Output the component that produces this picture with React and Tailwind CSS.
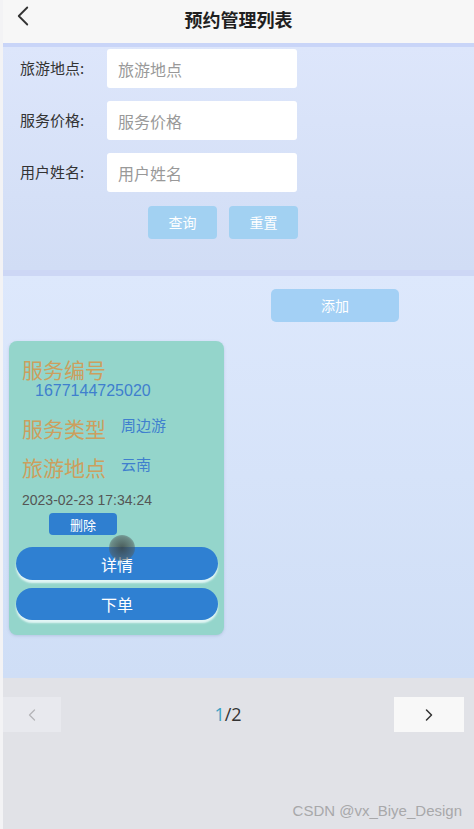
import { ChevronLeft, ChevronRight } from 'lucide-react';

const fields = [
  { label: '旅游地点:', placeholder: '旅游地点' },
  { label: '服务价格:', placeholder: '服务价格' },
  { label: '用户姓名:', placeholder: '用户姓名' },
];

const font = { fontFamily: '"Noto Sans CJK SC", "Noto Sans", sans-serif' };

export default function App() {
  return (
    <div
      className="w-[474px] h-[829px] flex flex-col border-l-[3px] border-[#f3f3f5] bg-[#e1e2e7] overflow-hidden"
      style={font}
    >
      {/* Header */}
      <div className="relative h-[43px] shrink-0 bg-[#f7f7f7] flex items-center justify-center">
        <ChevronLeft className="absolute left-[3px] -top-[1px] w-[34px] h-[34px] text-[#333]" strokeWidth={1.3} />
        <h1 className="text-[18px] font-bold text-[#1f1f1f] -mt-[5px]">预约管理列表</h1>
      </div>

      {/* Search form */}
      <div className="h-[233px] shrink-0 bg-gradient-to-b from-[#dde6fb] to-[#d1ddf5] border-t-[4px] border-b-[6px] border-t-[#c9d5f8] border-b-[#cdd7f5] pt-[2px] pl-[17px]">
        <div className="flex flex-col gap-[13px]">
          {fields.map((f) => (
            <div key={f.label} className="flex items-center h-[39px]">
              <span className="w-[87px] text-[15px] text-[#333]">{f.label}</span>
              <div className="w-[190px] h-[39px] bg-white rounded-[3px] flex items-center pl-[11px] text-[16px] text-[#999]">
                {f.placeholder}
              </div>
            </div>
          ))}
        </div>
        <div className="flex gap-[12px] pl-[128px] mt-[14px]">
          <button className="w-[69px] h-[33px] rounded-[4px] bg-[#a2d1f2] text-white text-[14px]">查询</button>
          <button className="w-[69px] h-[33px] rounded-[4px] bg-[#a2d1f2] text-white text-[14px]">重置</button>
        </div>
      </div>

      {/* List */}
      <div className="h-[402px] shrink-0 bg-gradient-to-b from-[#dde8fc] to-[#cfdef6] pt-[13px]">
        <div className="flex pl-[268px]">
          <button className="w-[128px] h-[33px] rounded-[5px] bg-[#a3d0f5] text-white text-[14px]">添加</button>
        </div>
        <div className="relative ml-[6px] mt-[19px] w-[215px] h-[294px] rounded-[8px] bg-[#94d5cb] pt-[16px] px-[7px] shadow-[0_1px_3px_rgba(120,140,180,0.3)]">
          <div className="pl-[6px]">
            <div className="text-[21px] leading-[24px] text-[#cc9f5e]">服务编号</div>
            <div className="mt-px pl-[13px] text-[16px] leading-[18px] text-[#3f7fce]" style={{ fontFamily: '"Liberation Sans", Arial, sans-serif' }}>
              1677144725020
            </div>
            <div className="flex items-start mt-[16px] gap-[15px]">
              <span className="text-[21px] leading-[24px] text-[#cc9f5e]">服务类型</span>
              <span className="text-[15px] leading-[18px] text-[#3f7fce]">周边游</span>
            </div>
            <div className="flex items-start mt-[15px] gap-[15px]">
              <span className="text-[21px] leading-[24px] text-[#cc9f5e]">旅游地点</span>
              <span className="text-[15px] leading-[18px] text-[#3f7fce]">云南</span>
            </div>
            <div className="mt-[12px] text-[14px] leading-[18px] text-[#555]" style={{ fontFamily: '"Liberation Sans", Arial, sans-serif' }}>
              2023-02-23 17:34:24
            </div>
          </div>
          <button className="ml-[33px] mt-[4px] w-[68px] h-[22px] rounded-[4px] bg-[#2f7fd0] text-white text-[13px] leading-none">删除</button>
          <button className="mt-[12px] w-[202px] h-[33px] rounded-full bg-[#2f80d2] text-white text-[16px] shadow-[0_3px_2px_rgba(235,250,250,0.9)]">详情</button>
          <button className="mt-[8px] w-[202px] h-[32px] rounded-full bg-[#2f80d2] text-white text-[16px] shadow-[0_3px_2px_rgba(235,250,250,0.9)]">下单</button>
          <div className="absolute left-[100px] top-[194px] w-[26px] h-[26px] rounded-full bg-[radial-gradient(circle,rgba(60,70,70,0.85)_0%,rgba(80,90,90,0.6)_60%,rgba(80,90,90,0)_100%)]" />
        </div>
      </div>

      {/* Pagination */}
      <div className="relative flex-1 pt-[19px]">
        <div className="flex items-center justify-between pr-[10px]">
          <div className="w-[58px] h-[35px] bg-[#e8e9ee] flex items-center justify-center">
            <ChevronLeft className="w-[20px] h-[20px] text-[#b5b5b8]" strokeWidth={1.5} />
          </div>
          <div className="text-[18px] text-[#333] ml-px" style={{ fontFamily: '"Open Sans", sans-serif' }}>
            <span className="text-[#3aa1c4]">1</span>/2
          </div>
          <div className="w-[70px] h-[35px] bg-[#f8f8f8] flex items-center justify-center">
            <ChevronRight className="w-[20px] h-[20px] text-[#333]" strokeWidth={1.8} />
          </div>
        </div>
        <div className="absolute right-[12px] bottom-[7px] text-[15px] text-[#a8a8aa]" style={{ fontFamily: '"Liberation Sans", Arial, sans-serif' }}>
          CSDN @vx_Biye_Design
        </div>
      </div>
    </div>
  );
}
